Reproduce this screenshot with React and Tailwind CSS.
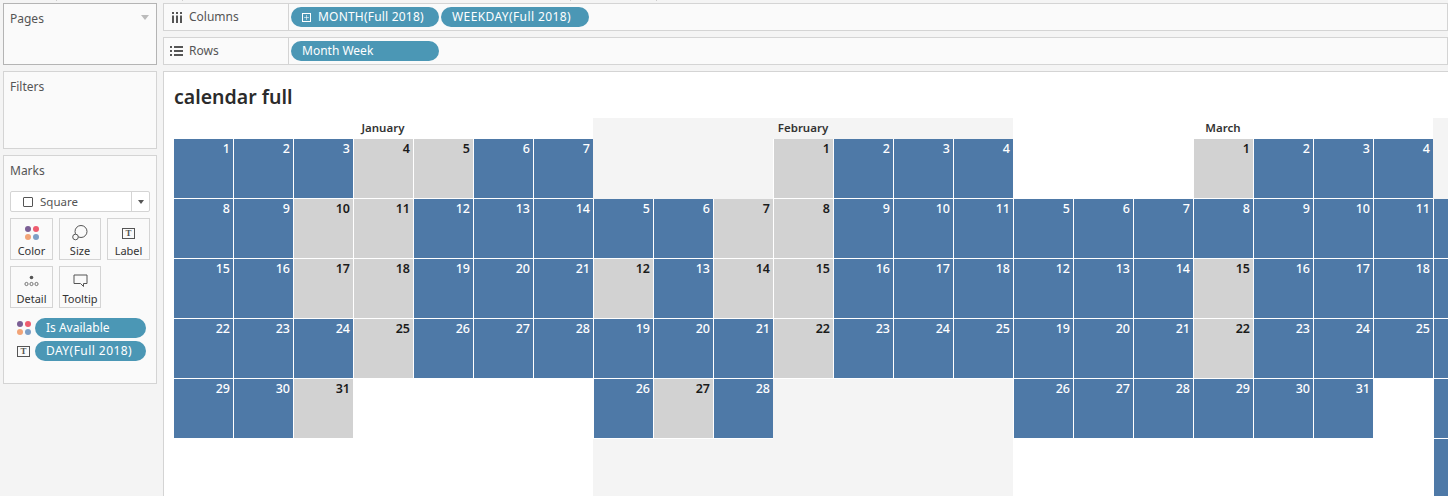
import { Plus } from 'lucide-react';

const FONT = 'font-["Noto_Sans",sans-serif]';

const MONTHS = [
  { name: 'January', offset: 0, days: 31, grey: [4, 5, 10, 11, 17, 18, 25, 31], bg: 'bg-white' },
  { name: 'February', offset: 3, days: 28, grey: [1, 7, 8, 12, 14, 15, 22, 27], bg: 'bg-[#f4f4f4]' },
  { name: 'March', offset: 3, days: 31, grey: [1, 15, 22], bg: 'bg-white' },
];

function Pill({ children, className = 'w-[148px]' }) {
  return (
    <div className={`flex h-5 shrink-0 items-center gap-[7px] rounded-full bg-[#4b97b5] px-[11px] text-[12px] text-white ${className}`}>
      {children}
    </div>
  );
}

function Dots() {
  return (
    <div className="grid grid-cols-2 gap-[2px]">
      <span className="h-[6px] w-[6px] rounded-full bg-[#7b5f95]" />
      <span className="h-[6px] w-[6px] rounded-full bg-[#ee5c6f]" />
      <span className="h-[6px] w-[6px] rounded-full bg-[#f2a477]" />
      <span className="h-[6px] w-[6px] rounded-full bg-[#7d9fc6]" />
    </div>
  );
}

function LabelIcon() {
  return (
    <span className="flex h-[11px] w-[13px] items-center justify-center border border-[#555] font-['Liberation_Serif',serif] text-[9px] font-bold leading-none text-[#555]">
      T
    </span>
  );
}

function MarkCard({ label, children }) {
  return (
    <div className="flex h-[42px] flex-col items-center justify-between border border-[#d4d4d4] bg-[#fafafa] pb-[3px] pt-[6px] text-[11px] leading-none text-[#333]">
      <div className="flex h-[16px] items-center">{children}</div>
      <span>{label}</span>
    </div>
  );
}

function Shelf({ icon, label, children }) {
  return (
    <div className="flex h-[28px] border border-[#d4d4d4] bg-[#fafafa]">
      <div className="flex w-[125px] shrink-0 items-center gap-[6px] border-r border-[#d4d4d4] pl-[6px] text-[12px] text-[#555]">
        <span className="flex w-[13px] justify-center">{icon}</span>
        {label}
      </div>
      <div className="flex items-center gap-[2px] pl-[2px]">{children}</div>
    </div>
  );
}

function Cell({ day, grey }) {
  return (
    <div
      className={`border-b border-l border-white pr-[3px] pt-px text-right text-[12.5px] leading-[18px] ${
        grey ? 'bg-[#d2d2d2] font-semibold text-[#1c1c1c]' : 'bg-[#4e79a7] font-medium text-white'
      }`}
    >
      {day}
    </div>
  );
}

function Month({ name, offset, days, grey, bg }) {
  const cells = Array.from({ length: days }, (_, i) => i + 1);
  return (
    <div className={`h-full w-[420px] shrink-0 ${bg}`}>
      <div className="flex h-[21px] items-center justify-center pb-[2px] text-[11.5px] font-semibold text-[#333]">{name}</div>
      <div className="grid grid-cols-[repeat(7,60px)] auto-rows-[60px]">
        {offset > 0 && <div style={{ gridColumn: `span ${offset}` }} />}
        {cells.map((d) => (
          <Cell key={d} day={d} grey={grey.includes(d)} />
        ))}
      </div>
    </div>
  );
}

export default function App() {
  return (
    <div className={`relative flex h-[496px] w-[1448px] gap-[6px] overflow-hidden bg-[#f4f4f4] pl-[3px] pt-[3px] ${FONT}`}>
      {/* leftover splitter ticks along the top edge */}
      <span className="absolute left-[56px] top-0 h-px w-px bg-[#cfcfcf]" />
      <span className="absolute left-[182px] top-0 h-px w-px bg-[#cfcfcf]" />
      <span className="absolute left-[570px] top-0 h-px w-px bg-[#cfcfcf]" />
      <span className="absolute left-[656px] top-0 h-px w-px bg-[#cfcfcf]" />

      <aside className="flex w-[154px] shrink-0 flex-col gap-[6px]">
        <div className="flex h-[62px] items-start justify-between border border-[#b4b4b4] bg-[#fafafa] px-[6px] pt-[6px] text-[12px] text-[#555]">
          Pages
          <span className="mr-[1px] mt-[5px] border-x-[4px] border-t-[5px] border-x-transparent border-t-[#bbb]" />
        </div>
        <div className="h-[78px] border border-[#d4d4d4] bg-[#fafafa] px-[6px] pt-[6px] text-[12px] text-[#555]">Filters</div>
        <div className="h-[229px] border border-[#d4d4d4] bg-[#fafafa] px-[6px] pt-[6px]">
          <div className="text-[12px] text-[#555]">Marks</div>
          <div className="mt-[11px] flex h-[21px] w-[140px] items-center rounded-[2px] border border-[#d4d4d4] bg-white text-[11.5px] text-[#555]">
            <span className="ml-[12px] h-[10px] w-[10px] rounded-[1px] border border-[#555]" />
            <span className="ml-[7px] flex-1">Square</span>
            <span className="flex h-full w-[18px] items-center justify-center border-l border-[#d4d4d4]">
              <span className="border-x-[3.5px] border-t-[4px] border-x-transparent border-t-[#555]" />
            </span>
          </div>
          <div className="mt-[6px] grid w-[140px] grid-cols-[43px_42px_43px] gap-x-[6px] gap-y-[6px]">
            <MarkCard label="Color"><Dots /></MarkCard>
            <MarkCard label="Size">
              <svg width="16" height="16" viewBox="0 0 16 16" fill="none" stroke="#555" strokeWidth="1">
                <circle cx="9" cy="6.5" r="6" />
                <circle cx="3.5" cy="12" r="2.8" fill="#fafafa" />
              </svg>
            </MarkCard>
            <MarkCard label="Label"><LabelIcon /></MarkCard>
            <MarkCard label="Detail">
              <svg width="15" height="14" viewBox="0 0 15 14" fill="none" stroke="#555" strokeWidth="0.8">
                <circle cx="7.5" cy="3.5" r="1.8" fill="#555" stroke="none" />
                <circle cx="2.5" cy="10" r="1.6" />
                <circle cx="7.5" cy="10" r="1.6" />
                <circle cx="12.5" cy="10" r="1.6" />
              </svg>
            </MarkCard>
            <MarkCard label="Tooltip">
              <svg width="15" height="14" viewBox="0 0 15 14" fill="none" stroke="#555" strokeWidth="1">
                <path d="M1 1h13v8.5h-3.5v3l-3-3H1z" />
              </svg>
            </MarkCard>
          </div>
          <div className="mt-[10px] flex flex-col gap-[3px]">
            <div className="flex items-center gap-[4px] pl-[7px]">
              <Dots />
              <Pill className="w-[111px]">Is Available</Pill>
            </div>
            <div className="flex items-center gap-[5px] pl-[7px]">
              <LabelIcon />
              <Pill className="w-[111px] tracking-[0.45px]">DAY(Full 2018)</Pill>
            </div>
          </div>
        </div>
      </aside>

      <div className="flex min-w-0 flex-1 flex-col gap-[6px]">
        <Shelf
          label="Columns"
          icon={
            <svg width="10" height="11" viewBox="0 0 10 11" fill="#555">
              <rect x="0" y="3.5" width="2" height="7.5" />
              <rect x="4" y="3.5" width="2" height="7.5" />
              <rect x="8" y="3.5" width="2" height="7.5" />
              <rect x="0" y="0" width="2" height="2" />
              <rect x="4" y="0" width="2" height="2" />
              <rect x="8" y="0" width="2" height="2" />
            </svg>
          }
        >
          <Pill className="w-[148px] tracking-[0.2px]">
            <span className="flex h-[9px] w-[9px] items-center justify-center border border-white">
              <Plus size={7} strokeWidth={2} />
            </span>
            MONTH(Full 2018)
          </Pill>
          <Pill className="w-[148px] tracking-[0.4px]">WEEKDAY(Full 2018)</Pill>
        </Shelf>
        <Shelf
          label="Rows"
          icon={
            <svg width="13" height="10" viewBox="0 0 13 10" fill="#555">
              <rect x="0" y="0" width="2" height="2" />
              <rect x="0" y="4" width="2" height="2" />
              <rect x="0" y="8" width="2" height="2" />
              <rect x="4" y="0" width="9" height="2" />
              <rect x="4" y="4" width="9" height="2" />
              <rect x="4" y="8" width="9" height="2" />
            </svg>
          }
        >
          <Pill>Month Week</Pill>
        </Shelf>
        <main className="flex-1 border-l border-t border-[#d4d4d4] bg-white">
          <h1 className="ml-[10px] flex h-[46px] items-end pb-[6px] text-[19.5px] font-semibold leading-[30px] text-[#2b2b2b]">calendar full</h1>
          <div className="ml-[9px] flex h-[378px]">
            {MONTHS.map((m) => (
              <Month key={m.name} {...m} />
            ))}
            <div className="grid h-full w-[15px] shrink-0 auto-rows-[60px] bg-[#f4f4f4] pt-[81px]">
              {[2, 9, 16, 23, 30].map((d) => (
                <Cell key={d} />
              ))}
            </div>
          </div>
        </main>
      </div>
    </div>
  );
}
